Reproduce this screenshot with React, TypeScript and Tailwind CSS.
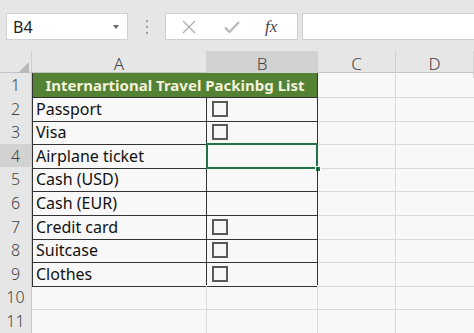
const ROWS = [
  { n: 1, label: "", box: false },
  { n: 2, label: "Passport", box: true },
  { n: 3, label: "Visa", box: true },
  { n: 4, label: "Airplane ticket", box: false },
  { n: 5, label: "Cash (USD)", box: false },
  { n: 6, label: "Cash (EUR)", box: false },
  { n: 7, label: "Credit card", box: true },
  { n: 8, label: "Suitcase", box: true },
  { n: 9, label: "Clothes", box: true },
  { n: 10, label: "", box: false },
  { n: 11, label: "", box: false },
];

const GRID = "grid grid-cols-[32px_175px_111px_78px_1fr]";

function Checkbox() {
  return <div className="w-[16px] h-[16px] border-2 border-[#5a5a5a] ml-[5px]" />;
}

function Toolbar() {
  return (
    <div className="h-[51px] flex items-start pt-[13px] bg-[#e6e6e6]">
      {/* name box */}
      <div className="ml-[6px] w-[122px] h-[27px] bg-white border border-[#d0d0d0] flex items-center justify-between pl-[6px] pr-[8px]">
        <span className="text-[16px] text-[#222]">B4</span>
        <div className="w-0 h-0 border-l-[3px] border-r-[3px] border-t-[4px] border-l-transparent border-r-transparent border-t-[#666]" />
      </div>
      {/* dots */}
      <div className="w-[37px] h-[27px] flex flex-col items-center justify-center gap-[4px]">
        <div className="w-[2px] h-[2px] bg-[#a0a0a0]" />
        <div className="w-[2px] h-[2px] bg-[#a0a0a0]" />
        <div className="w-[2px] h-[2px] bg-[#a0a0a0]" />
      </div>
      {/* formula buttons */}
      <div className="w-[133px] h-[27px] bg-white border border-[#d0d0d0] flex items-center">
        <svg width="14" height="14" viewBox="0 0 14 14" className="ml-[16px]">
          <path d="M1 1L13 13M13 1L1 13" stroke="#b0b0b0" strokeWidth="1.3" fill="none" />
        </svg>
        <svg width="16" height="14" viewBox="0 0 16 14" className="ml-[28px]">
          <path d="M1 7.5L5.5 12L15 2" stroke="#b8b8b8" strokeWidth="2.2" fill="none" />
        </svg>
        <span className="ml-[25px] text-[17px] italic text-[#444] font-['Liberation_Serif',serif]">fx</span>
      </div>
      {/* formula input */}
      <div className="ml-[4px] flex-1 h-[27px] bg-white border border-[#d0d0d0] border-r-0" />
    </div>
  );
}

function HeaderRow() {
  const cols = ["A", "B", "C", "D"];
  return (
    <div className={`${GRID} h-[22px] bg-[#e6e6e6] border-b border-[#c4c4c4]`}>
      <div className="flex items-end justify-end pr-[2px] pb-[2px] border-r border-[#d0d0d0]">
        <svg width="14" height="14" viewBox="0 0 14 14">
          <path d="M14 0L14 14L0 14Z" fill="#b9b9b9" />
        </svg>
      </div>
      {cols.map((c) => (
        <div
          key={c}
          className={`flex items-end justify-center pb-[1px] text-[17px] font-light text-[#444] border-r border-[#d0d0d0] ${
            c === "B" ? "bg-[#d2d2d2]" : ""
          }`}
        >
          {c}
        </div>
      ))}
    </div>
  );
}

function Row({ n, label, box }: { n: number; label: string; box: boolean }) {
  const inTable = n >= 1 && n <= 9;
  const bottom = inTable ? "border-b border-[#333]" : "border-b border-[#dadada]";
  return (
    <div className={`${GRID} h-[23.6px]`}>
      <div
        className={`flex items-center justify-center text-[16px] font-light text-[#444] border-r border-b border-[#c8c8c8] ${
          n === 4 ? "bg-[#d2d2d2]" : "bg-[#e6e6e6]"
        }`}
      >
        {n}
      </div>
      {n === 1 ? (
        <div className="col-span-2 bg-[#548235] border-l border-r border-b border-[#333] flex items-center justify-center text-[15px] font-bold text-[#f3f1dc]">
          Internartional Travel Packinbg List
        </div>
      ) : (
        <>
          <div
            className={`flex items-center pl-[3px] text-[16px] text-[#111] ${
              inTable ? "border-l border-r border-[#333]" : "border-r border-[#dadada]"
            } ${bottom}`}
          >
            {label}
          </div>
          <div
            className={`relative flex items-center ${inTable ? "border-r border-[#333]" : "border-r border-[#dadada]"} ${bottom}`}
          >
            {box && <Checkbox />}
            {n === 4 && (
              <>
                <div className="absolute -left-[1px] -top-[1px] -right-[1px] -bottom-[1px] border-2 border-[#217346]" />
                <div className="absolute -right-[4px] -bottom-[4px] w-[6px] h-[6px] bg-[#217346] border border-white" />
              </>
            )}
          </div>
        </>
      )}
      <div className="border-r border-b border-[#dadada]" />
      <div className="border-b border-[#dadada]" />
    </div>
  );
}

export default function App() {
  return (
    <div className="w-[474px] h-[333px] overflow-hidden bg-[#f8f8f8] font-['Noto_Sans','Open_Sans',sans-serif]">
      <Toolbar />
      <HeaderRow />
      {ROWS.map((r) => (
        <Row key={r.n} n={r.n} label={r.label} box={r.box} />
      ))}
    </div>
  );
}
